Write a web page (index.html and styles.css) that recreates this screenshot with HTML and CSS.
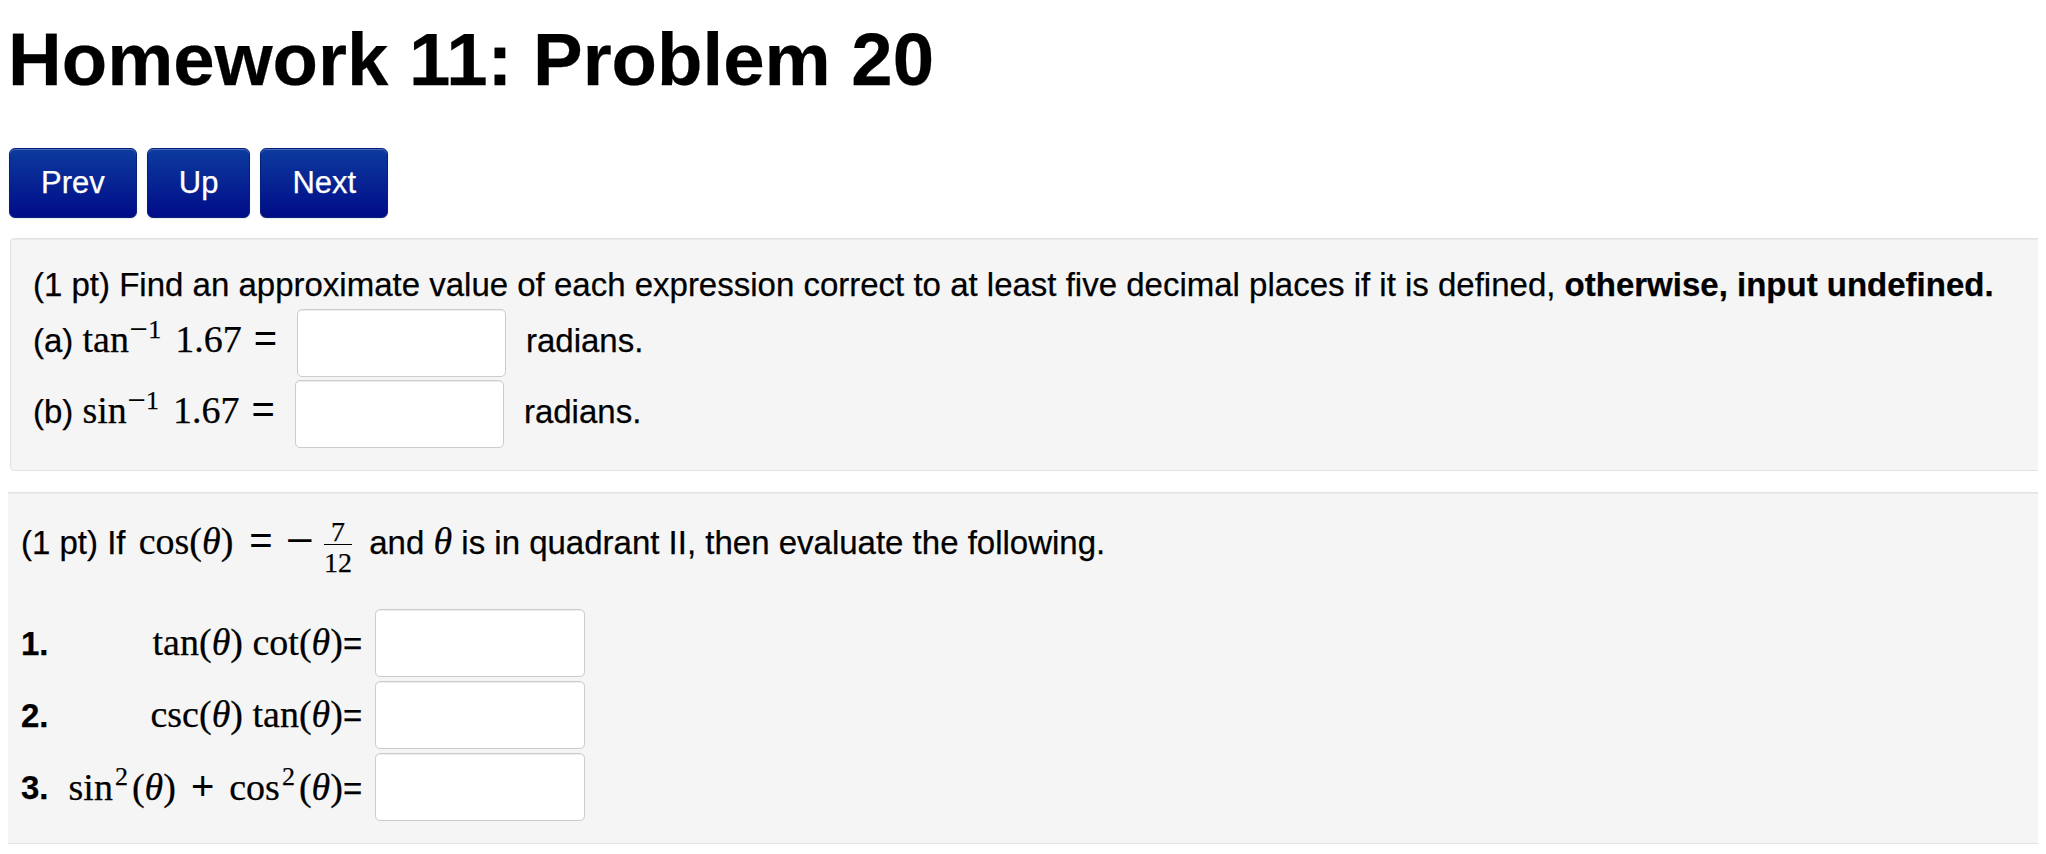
FILE: index.html
```html
<!DOCTYPE html>
<html lang="en">
<head>
<meta charset="utf-8">
<title>Homework 11: Problem 20</title>
<link rel="stylesheet" href="styles.css">
</head>
<body>
<h1 class="title">Homework 11: Problem 20</h1>
<nav class="nav">
  <a class="btn" href="#">Prev</a>
  <a class="btn" href="#">Up</a>
  <a class="btn" href="#">Next</a>
</nav>
<section class="well well-first">
  <p class="lead">(1 pt) Find an approximate value of each expression correct to at least five decimal places if it is defined, <b>otherwise, input undefined.</b></p>
  <div class="arow">(a) <span class="m">tan<span class="sup"><span class="op minus">−</span>1</span><span class="val">1.67</span><span class="rel op">=</span></span><input class="ans" type="text"><span class="unit">radians.</span></div>
  <div class="arow">(b) <span class="m">sin<span class="sup"><span class="op minus">−</span>1</span><span class="val">1.67</span><span class="rel op">=</span></span><input class="ans" type="text"><span class="unit">radians.</span></div>
</section>
<section class="well well-second">
  <p class="lead lead-2">(1 pt) If <span class="m m-lead">cos(<i>θ</i>)<span class="rel2 op">=</span><span class="op minus">−</span><span class="frac"><span class="fn">7</span><span class="fd">12</span></span></span> and <i class="m">θ</i> is in quadrant II, then evaluate the following.</p>
  <div class="qlist">
    <span class="qn">1.</span><span class="qm"><span class="m">tan(<i>θ</i>) cot(<i>θ</i>)</span>=</span><input class="ans ans-2" type="text">
    <span class="qn">2.</span><span class="qm"><span class="m">csc(<i>θ</i>) tan(<i>θ</i>)</span>=</span><input class="ans ans-2" type="text">
    <span class="qn">3.</span><span class="qm"><span class="m">sin<span class="sq">2</span>(<i>θ</i>)<span class="bin op">+</span>cos<span class="sq">2</span>(<i>θ</i>)</span>=</span><input class="ans ans-2" type="text">
  </div>
</section>
</body>
</html>
```

FILE: styles.css
```css
html {
  overflow: hidden;
  background: #fff;
}

body {
  margin: 8px;
  font-family: "Liberation Sans", Arial, Helvetica, sans-serif;
  font-size: 33px;
  color: #000;
  background: #fff;
  -webkit-text-stroke: 0.25px currentColor;
}

.title {
  font-size: 74.4px;
  font-weight: bold;
  line-height: normal;
  margin: 9px 0 0 0;
  color: #000;
}

.nav {
  display: flex;
  gap: 10px;
  margin: 46px 0 0 1px;
}

.btn {
  display: inline-flex;
  align-items: center;
  box-sizing: border-box;
  height: 70px;
  padding: 0 31px;
  font-size: 31px;
  color: #fff;
  text-decoration: none;
  border: 1px solid #06207a;
  border-radius: 6px;
  background: linear-gradient(#0d3b9e, #000c88);
  box-shadow: inset 0 1px 0 rgba(255, 255, 255, 0.25), 0 1px 2px rgba(0, 0, 0, 0.1);
}

.well {
  background: #f5f5f5;
  border: 1px solid #e3e3e3;
  border-radius: 4px;
  box-shadow: inset 0 1px 1px rgba(0, 0, 0, 0.05);
}

.well-first {
  margin: 20px -8px 0 2px;
  padding: 22px 22px 20px 22px;
}

.well-second {
  margin: 21px -8px 0 -10px;
  padding: 24px 22px 20px 22px;
}

.lead {
  margin: 0;
  line-height: 47px;
  white-space: nowrap;
}

.lead b {
  font-weight: bold;
}

.m {
  font-family: "Liberation Serif", "Times New Roman", serif;
  font-size: 38px;
}

.m i,
i.m {
  font-style: italic;
}

.m .op {
  font-family: "Liberation Sans", Arial, sans-serif;
  -webkit-text-stroke: 0;
}

.m > .op {
  font-size: 40px;
}

.minus {
  display: inline-block;
  transform: scaleX(1.2);
}

.arow {
  line-height: 38px;
  white-space: nowrap;
}

.sup {
  font-size: 26px;
  line-height: 0;
  vertical-align: 14px;
  margin-left: 2px;
}

.sup .minus {
  margin-right: 2px;
}

.val {
  margin-left: 14px;
}

.rel {
  margin-left: 12px;
}

.ans {
  box-sizing: border-box;
  width: 209px;
  height: 68px;
  margin: 1px 0 2px 20px;
  padding: 0;
  vertical-align: middle;
  background: #fff;
  border: 1px solid #ccc;
  border-radius: 5px;
  box-shadow: inset 0 1px 1px rgba(0, 0, 0, 0.075);
}

.unit {
  margin-left: 20px;
}

.m-lead {
  margin-left: 4px;
}

.rel2 {
  margin: 0 15px 0 16px;
}

.frac {
  display: inline-block;
  vertical-align: -18px;
  text-align: center;
  font-size: 28px;
  margin: 0 8px 0 13px;
}

.fn {
  display: block;
  line-height: 24px;
  padding: 0 3px;
  border-bottom: 1.5px solid #000;
}

.fd {
  display: block;
  line-height: 24px;
  padding-top: 6px;
}

.qlist {
  display: grid;
  grid-template-columns: auto auto auto;
  justify-content: start;
  align-items: center;
  margin-top: 32px;
}

.qn {
  font-weight: bold;
  line-height: 47px;
}

.qm {
  line-height: 47px;
  text-align: right;
  padding-left: 20px;
  white-space: nowrap;
}

.sq {
  font-size: 26px;
  line-height: 0;
  vertical-align: 15px;
  margin: 0 4px 0 2px;
}

.bin {
  margin: 0 15px;
}

.ans-2 {
  width: 210px;
  margin: 2px 0 2px 13px;
}
```
